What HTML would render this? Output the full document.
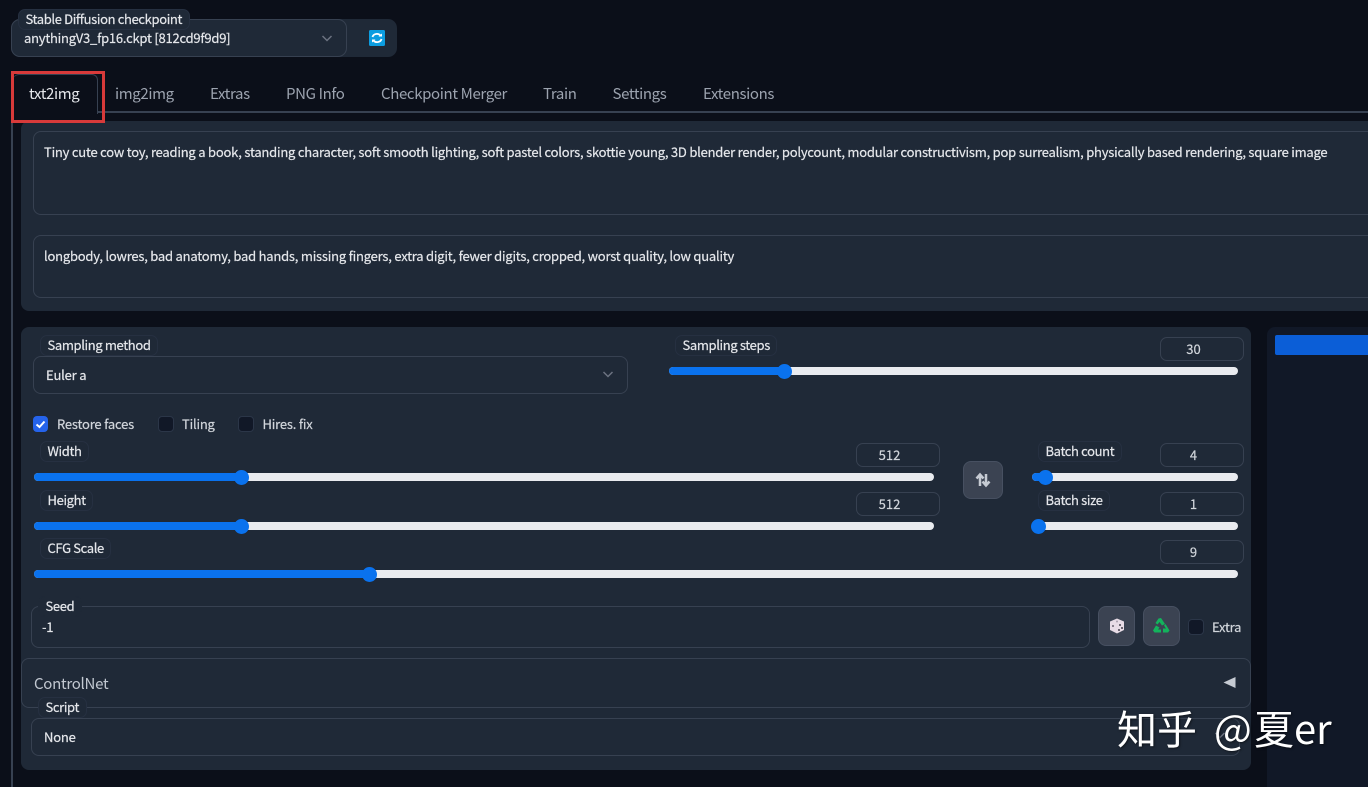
<!DOCTYPE html>
<html><head><meta charset="utf-8">
<style>
html,body{margin:0;padding:0;background:#0b0f19;}
body{width:1368px;height:787px;position:relative;overflow:hidden;font-family:"Noto Sans CJK SC","Liberation Sans",sans-serif;color:#d1d5db;font-size:14px;}
div,span{position:absolute;box-sizing:border-box;white-space:nowrap;}
.t{line-height:20px;letter-spacing:-.2px;-webkit-text-stroke:.2px currentColor;}
.lab{background:#1f2937;border:1px solid #263041;border-radius:7px;height:21px;line-height:18px;padding:0 6.500px;color:#e5e7eb;font-size:13px;letter-spacing:-.36px;-webkit-text-stroke:.2px currentColor;}
.box{border:1px solid #374151;border-radius:8px;background:#1f2937;}
.num{border:1px solid #374151;border-radius:7px;background:#1f2937;width:84px;height:24px;text-align:center;line-height:21px;font-size:13px;color:#d1d5db;padding-right:17px;-webkit-text-stroke:.2px currentColor;}
.track{height:8px;border-radius:4px;background:#e9ebef;}
.fill{height:8px;border-radius:4px 0 0 4px;background:#0a72ee;}
.thumb{width:15px;height:15px;border-radius:50%;background:#0a72ee;}
.tab{top:83px;line-height:21px;font-size:15px;color:#9ca3af;letter-spacing:-.36px;}
.cb{width:16px;height:16px;border-radius:4px;background:#111827;border:1px solid #2b3648;}
.btn{background:#3b4352;border:1px solid #475061;border-radius:8px;}
.wm{top:701px;line-height:52px;font-size:40px;color:#fff;text-shadow:1px 1px 2px rgba(0,0,0,.5);}
</style></head><body>

<!-- checkpoint -->
<div style="left:11px;top:19px;width:386px;height:38px;background:#1f2937;border-radius:9px"></div>
<div class="box" style="left:11px;top:19px;width:336px;height:38px;border-radius:9px;"></div>
<div class="lab" style="left:18px;top:9px;height:21px;color:#e5e7eb">Stable Diffusion checkpoint</div>
<div class="t" style="left:24px;top:28px;font-size:13px;color:#e5e7eb;letter-spacing:-.23px">anythingV3_fp16.ckpt [812cd9f9d9]</div>
<svg style="position:absolute;left:321px;top:34px" width="12" height="9" viewBox="0 0 12 9"><path d="M1.500 2 L6 6.500 L10.500 2" fill="none" stroke="#6b7280" stroke-width="1.500"/></svg>
<svg style="position:absolute;left:369px;top:30px" width="16" height="16" viewBox="0 0 16 16"><rect width="16" height="16" rx="1.500" fill="#0c9de0"/><path d="M3.500 7 A4.500 4 0 0 1 11.500 5.500 M12.500 9 A4.500 4 0 0 1 4.500 10.500" fill="none" stroke="#fff" stroke-width="1.800"/><path d="M9.500 6.500 L13 6.500 L13 3.500Z M6.500 9.500 L3 9.500 L3 12.500Z" fill="#fff"/></svg>

<!-- tabs -->
<div style="left:98px;top:111px;width:1270px;height:2px;background:#374151"></div>
<div style="left:11px;top:111px;width:2px;height:676px;background:#374151"></div>
<div style="left:13px;top:74px;width:85px;height:40px;background:#0b0f19;border:1px solid #374151;border-bottom:none;border-left:none;border-radius:6px 6px 0 0"></div>
<div class="tab" style="left:29px;color:#e5e7eb">txt2img</div>
<div class="tab" style="left:115px">img2img</div>
<div class="tab" style="left:210px">Extras</div>
<div class="tab" style="left:286px">PNG Info</div>
<div class="tab" style="left:381px">Checkpoint Merger</div>
<div class="tab" style="left:543px">Train</div>
<div class="tab" style="left:612.500px">Settings</div>
<div class="tab" style="left:703px">Extensions</div>

<!-- prompt panel -->
<div style="left:21px;top:121px;width:1347px;height:190px;background:#1f2937;border-radius:8px 0 0 8px"></div>
<div class="box" style="left:33px;top:131px;width:1345px;height:84px"></div>
<div class="t" style="left:44px;top:142px;font-size:13px;color:#e5e7eb;letter-spacing:-.22px">Tiny cute cow toy, reading a book, standing character, soft smooth lighting, soft pastel colors, skottie young, 3D blender render, polycount, modular constructivism, pop surrealism, physically based rendering, square image</div>
<div class="box" style="left:33px;top:235px;width:1345px;height:63px"></div>
<div class="t" style="left:44px;top:246px;font-size:13px;color:#e5e7eb;letter-spacing:-.22px">longbody, lowres, bad anatomy, bad hands, missing fingers, extra digit, fewer digits, cropped, worst quality, low quality</div>

<!-- red highlight -->
<div style="left:11px;top:71px;width:94px;height:52px;border:3px solid #d83a3a;z-index:5"></div>

<!-- right column -->
<div style="left:1267px;top:327px;width:101px;height:460px;background:#111827;border-radius:8px 0 0 0"></div>
<div style="left:1275px;top:335px;width:93px;height:20px;background:#0b5ed7;border-radius:2px 0 0 2px"></div>

<!-- settings panel -->
<div style="left:21px;top:327px;width:1230px;height:443px;background:#1f2937;border-radius:8px"></div>

<div class="box" style="left:33px;top:356px;width:595px;height:38px"></div>
<div class="lab" style="left:40px;top:335px">Sampling method</div>
<div class="t" style="left:46px;top:365px;font-size:13px;color:#e5e7eb">Euler a</div>
<svg style="position:absolute;left:602px;top:370px" width="12" height="9" viewBox="0 0 12 9"><path d="M1.500 2 L6 6.500 L10.500 2" fill="none" stroke="#6b7280" stroke-width="1.500"/></svg>

<div class="lab" style="left:675px;top:335px">Sampling steps</div>
<div class="num" style="left:1160px;top:337px">30</div>
<div class="track" style="left:669px;top:367px;width:569px"></div>
<div class="fill" style="left:669px;top:367px;width:115px"></div>
<div class="thumb" style="left:777px;top:363.500px"></div>

<div style="left:33px;top:416px;width:15px;height:16px;border-radius:4px;background:#2563eb"></div>
<svg style="position:absolute;left:33px;top:416px" width="15" height="16" viewBox="0 0 15 16"><path d="M3.500 8.500 L6.500 11 L11.500 5.500" fill="none" stroke="#fff" stroke-width="2"/></svg>
<div class="t" style="left:57px;top:414px;font-size:13px;color:#d1d5db">Restore faces</div>
<div class="cb" style="left:158px;top:416px"></div>
<div class="t" style="left:182px;top:414px;font-size:13px">Tiling</div>
<div class="cb" style="left:238px;top:416px"></div>
<div class="t" style="left:262.500px;top:414px;font-size:13px">Hires. fix</div>

<div class="lab" style="left:40px;top:441px">Width</div>
<div class="num" style="left:856px;top:443px">512</div>
<div class="track" style="left:34px;top:473px;width:900px"></div>
<div class="fill" style="left:34px;top:473px;width:207px"></div>
<div class="thumb" style="left:233.500px;top:469.500px"></div>

<div class="lab" style="left:40px;top:490px">Height</div>
<div class="num" style="left:856px;top:492px">512</div>
<div class="track" style="left:34px;top:522px;width:900px"></div>
<div class="fill" style="left:34px;top:522px;width:207px"></div>
<div class="thumb" style="left:233.500px;top:518.500px"></div>

<div class="btn" style="left:963px;top:461px;width:40px;height:38px"></div>
<svg style="position:absolute;left:975px;top:472px" width="16" height="16" viewBox="0 0 16 16"><path d="M5 14 V3 M1.500 6.500 L5 2.500 L8.500 6.500 M11 2 V13 M7.500 9.500 L11 13.500 L14.500 9.500" fill="none" stroke="#c6cbd3" stroke-width="2.500"/></svg>

<div class="lab" style="left:1038px;top:441px">Batch count</div>
<div class="num" style="left:1160px;top:443px">4</div>
<div class="track" style="left:1032px;top:473px;width:206px"></div>
<div class="fill" style="left:1032px;top:473px;width:12px"></div>
<div class="thumb" style="left:1038px;top:469.500px"></div>

<div class="lab" style="left:1038px;top:490px">Batch size</div>
<div class="num" style="left:1160px;top:492px">1</div>
<div class="track" style="left:1032px;top:522px;width:206px"></div>
<div class="thumb" style="left:1031px;top:518.500px"></div>

<div class="lab" style="left:40px;top:538px">CFG Scale</div>
<div class="num" style="left:1160px;top:540px">9</div>
<div class="track" style="left:34px;top:570px;width:1204px"></div>
<div class="fill" style="left:34px;top:570px;width:335px"></div>
<div class="thumb" style="left:362px;top:566.500px"></div>

<!-- seed -->
<div class="box" style="left:31px;top:606px;width:1059px;height:42px"></div>
<div class="lab" style="left:38px;top:596px;border-color:#1f2937">Seed</div>
<div class="t" style="left:42px;top:617px;font-size:13px;color:#e5e7eb">-1</div>
<div class="btn" style="left:1098px;top:606px;width:37px;height:40px"></div>
<svg style="position:absolute;left:1108px;top:617px" width="18" height="18" viewBox="0 0 18 18"><path d="M9 1.500 L16 4.500 V13 L9 16.500 L2 13 V4.500Z" fill="#e8dce6"/><circle cx="9" cy="4.500" r="1" fill="#a9a0ae"/><circle cx="5" cy="9" r="1" fill="#6b6472"/><circle cx="12" cy="8" r="1" fill="#45404c"/><circle cx="14" cy="11" r="1" fill="#45404c"/><circle cx="11" cy="13" r="1" fill="#45404c"/></svg>
<div class="btn" style="left:1143px;top:606px;width:37px;height:40px"></div>
<svg style="position:absolute;left:1152px;top:617px" width="18" height="17" viewBox="0 0 18 17"><path d="M9 1 L13 7 L10 8.500 L7.500 5 L5.500 7.500 L3.500 6 L6.500 1.500Z M13.500 7 L17.500 13.500 L16 15.500 L11 15.500 L11 11.500 L14 11.500 L12 8.500 Z M1 13.500 L4 8.500 L7.500 10.500 L6 12.500 L9 12.500 L9 15.500 L2.500 15.500Z" fill="#13b35c"/></svg>
<div class="cb" style="left:1188px;top:619px"></div>
<div class="t" style="left:1212px;top:617px;font-size:13px">Extra</div>

<!-- controlnet -->
<div style="left:21px;top:658px;width:1230px;height:50px;border:1px solid #374151;border-radius:8px"></div>
<div class="t" style="left:34px;top:674px;font-size:15px;color:#c2c8d1;letter-spacing:-.28px;-webkit-text-stroke:0">ControlNet</div>
<svg style="position:absolute;left:1223px;top:676px" width="13" height="13" viewBox="0 0 13 13"><path d="M0.500 6.500 L12.500 1 V12Z" fill="#c6cbd3"/></svg>

<!-- script -->
<div class="box" style="left:31px;top:718px;width:1209px;height:38px"></div>
<div class="lab" style="left:38px;top:697px;border-color:#263041">Script</div>
<div class="t" style="left:44px;top:727px;font-size:13px;color:#e5e7eb">None</div>
<svg style="position:absolute;left:1214px;top:731px" width="12" height="9" viewBox="0 0 12 9"><path d="M1.500 2 L6 6.500 L10.500 2" fill="none" stroke="#6b7280" stroke-width="1.500"/></svg>

<!-- watermark -->
<div class="wm" style="left:1117px">知乎</div>
<div class="wm" style="left:1214px">@</div>
<div class="wm" style="left:1254px">夏</div>
<div class="wm" style="left:1294px">er</div>

</body></html>
